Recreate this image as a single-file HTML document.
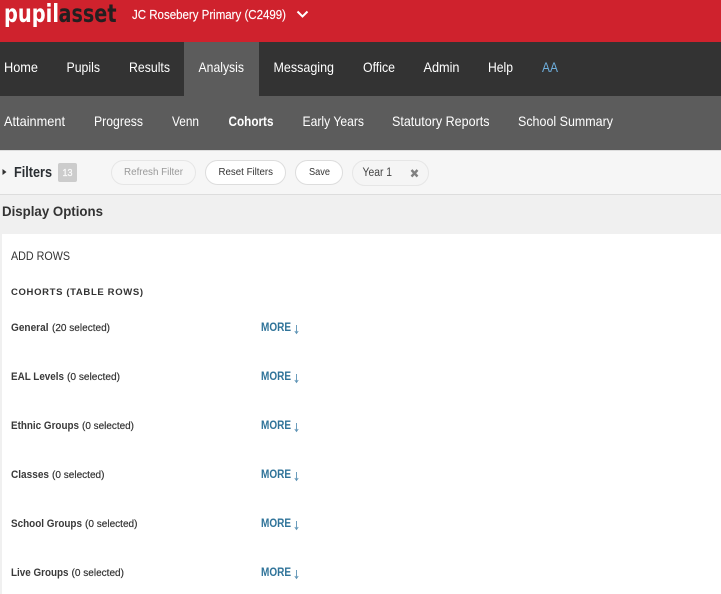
<!DOCTYPE html>
<html lang="en">
<head>
<meta charset="utf-8">
<title>Pupil Asset</title>
<style>
html,body{margin:0;padding:0;width:721px;height:594px;overflow:hidden;background:#fff}
svg{display:block}
text{font-family:"Liberation Sans",sans-serif}
.n{font-size:14px;fill:#fff}
.b{font-weight:bold}
.l{font-size:11px;font-weight:bold;fill:#3a3a3a}
.s{font-size:10px;fill:#333;stroke:#333;stroke-width:.18px}
.m{font-size:11.500px;font-weight:bold;fill:#2f7399}
.a{fill:none;stroke:#5d93b5;stroke-width:.9}
</style>
</head>
<body>
<svg width="721" height="594" viewBox="0 0 721 594" xmlns="http://www.w3.org/2000/svg">
<rect width="721" height="42" fill="#cf222d"/>
<rect y="42" width="721" height="54" fill="#333"/>
<rect y="96" width="721" height="54" fill="#5c5c5c"/>
<rect x="184" y="42" width="75" height="54" fill="#5c5c5c"/>
<rect y="150" width="721" height="1" fill="#ddd"/>
<rect y="151" width="721" height="43" fill="#f6f6f6"/>
<rect y="194" width="721" height="1" fill="#ddd"/>
<rect y="195" width="721" height="39" fill="#f0f0f0"/>
<rect y="234" width="2" height="360" fill="#f0f0f0"/>

<text x="4" y="22" font-size="25" font-weight="bold" fill="#fff" textLength="55" lengthAdjust="spacingAndGlyphs" style="font-family:'DejaVu Sans',sans-serif">pupil</text>
<text x="58.500" y="22" font-size="25" font-weight="bold" fill="#231f20" textLength="58" lengthAdjust="spacingAndGlyphs" style="font-family:'DejaVu Sans',sans-serif">asset</text>
<text x="132" y="19" font-size="13" fill="#fff" textLength="154" lengthAdjust="spacingAndGlyphs" stroke="#fff" stroke-width=".15">JC Rosebery Primary (C2499)</text>
<path d="M297.500 11.500L302.500 16.500L307.500 11.500" fill="none" stroke="#fff" stroke-width="2"/>

<text class="n" x="4" y="72" textLength="34" lengthAdjust="spacingAndGlyphs">Home</text>
<text class="n" x="66.500" y="72" textLength="33.500" lengthAdjust="spacingAndGlyphs">Pupils</text>
<text class="n" x="129" y="72" textLength="41" lengthAdjust="spacingAndGlyphs">Results</text>
<text class="n" x="198.500" y="72" textLength="45.500" lengthAdjust="spacingAndGlyphs">Analysis</text>
<text class="n" x="273.500" y="72" textLength="60.500" lengthAdjust="spacingAndGlyphs">Messaging</text>
<text class="n" x="363" y="72" textLength="32" lengthAdjust="spacingAndGlyphs">Office</text>
<text class="n" x="423.500" y="72" textLength="36" lengthAdjust="spacingAndGlyphs">Admin</text>
<text class="n" x="488" y="72" textLength="25" lengthAdjust="spacingAndGlyphs">Help</text>
<text class="n" x="542" y="72" textLength="16" lengthAdjust="spacingAndGlyphs" style="fill:#6fb0de">AA</text>

<text class="n" x="4" y="126" textLength="61" lengthAdjust="spacingAndGlyphs">Attainment</text>
<text class="n" x="94" y="126" textLength="49" lengthAdjust="spacingAndGlyphs">Progress</text>
<text class="n" x="172" y="126" textLength="27" lengthAdjust="spacingAndGlyphs">Venn</text>
<text class="n b" x="228.500" y="126" textLength="45" lengthAdjust="spacingAndGlyphs">Cohorts</text>
<text class="n" x="302.500" y="126" textLength="61.500" lengthAdjust="spacingAndGlyphs">Early Years</text>
<text class="n" x="392" y="126" textLength="97.500" lengthAdjust="spacingAndGlyphs">Statutory Reports</text>
<text class="n" x="518" y="126" textLength="95" lengthAdjust="spacingAndGlyphs">School Summary</text>

<path d="M2.500 169L6.500 172L2.500 175Z" fill="#333"/>
<text x="14" y="177" font-size="15" font-weight="bold" fill="#2b2f33" textLength="38" lengthAdjust="spacingAndGlyphs">Filters</text>
<rect x="58" y="163" width="19" height="19" rx="2" fill="#ccc"/>
<text x="62.500" y="176" font-size="10.500" fill="#fafafa" textLength="10" lengthAdjust="spacingAndGlyphs" stroke="#fafafa" stroke-width=".25">13</text>

<rect x="111.500" y="160.500" width="84" height="24" rx="12" fill="#f7f7f7" stroke="#e6e6e6"/>
<text x="124" y="175" font-size="10" fill="#999" textLength="59" lengthAdjust="spacingAndGlyphs">Refresh Filter</text>
<rect x="205.500" y="160.500" width="80" height="24" rx="12" fill="#fff" stroke="#ddd"/>
<text x="218.500" y="175" font-size="10" fill="#333" textLength="54.500" lengthAdjust="spacingAndGlyphs">Reset Filters</text>
<rect x="295.500" y="160.500" width="47" height="24" rx="12" fill="#fff" stroke="#ddd"/>
<text x="309" y="175" font-size="10" fill="#333" textLength="21" lengthAdjust="spacingAndGlyphs">Save</text>
<rect x="352.500" y="160.500" width="76" height="25" rx="12.500" fill="#f5f5f5" stroke="#e6e6e6"/>
<text x="362.500" y="176" font-size="11.500" fill="#444" textLength="29.500" lengthAdjust="spacingAndGlyphs">Year 1</text>
<path d="M411.500 170L417.500 176.500M417.500 170L411.500 176.500" stroke="#808080" stroke-width="2.400" fill="none"/>

<text x="2" y="216" font-size="14" font-weight="bold" fill="#333" textLength="101" lengthAdjust="spacingAndGlyphs">Display Options</text>

<text x="11" y="260" font-size="12" fill="#333" textLength="59" lengthAdjust="spacingAndGlyphs">ADD ROWS</text>
<text x="11" y="295" font-size="9.500" font-weight="bold" fill="#333" textLength="132" lengthAdjust="spacing">COHORTS (TABLE ROWS)</text>

<text class="l" x="11" y="331" textLength="37.500" lengthAdjust="spacingAndGlyphs">General</text>
<text class="s" x="52" y="331" textLength="58" lengthAdjust="spacingAndGlyphs">(20 selected)</text>
<text class="m" x="261" y="331" textLength="30" lengthAdjust="spacingAndGlyphs">MORE</text>
<path class="a" d="M296.500 325V333M294.800 331L296.500 333.500L298.200 331"/>

<text class="l" x="11" y="380" textLength="53" lengthAdjust="spacingAndGlyphs">EAL Levels</text>
<text class="s" x="67" y="380" textLength="53" lengthAdjust="spacingAndGlyphs">(0 selected)</text>
<text class="m" x="261" y="380" textLength="30" lengthAdjust="spacingAndGlyphs">MORE</text>
<path class="a" d="M296.500 374V382M294.800 380L296.500 382.500L298.200 380"/>

<text class="l" x="11" y="429" textLength="68" lengthAdjust="spacingAndGlyphs">Ethnic Groups</text>
<text class="s" x="82" y="429" textLength="52" lengthAdjust="spacingAndGlyphs">(0 selected)</text>
<text class="m" x="261" y="429" textLength="30" lengthAdjust="spacingAndGlyphs">MORE</text>
<path class="a" d="M296.500 423V431M294.800 429L296.500 431.500L298.200 429"/>

<text class="l" x="11" y="478" textLength="38" lengthAdjust="spacingAndGlyphs">Classes</text>
<text class="s" x="52" y="478" textLength="52.500" lengthAdjust="spacingAndGlyphs">(0 selected)</text>
<text class="m" x="261" y="478" textLength="30" lengthAdjust="spacingAndGlyphs">MORE</text>
<path class="a" d="M296.500 472V480M294.800 478L296.500 480.500L298.200 478"/>

<text class="l" x="11" y="527" textLength="71" lengthAdjust="spacingAndGlyphs">School Groups</text>
<text class="s" x="85" y="527" textLength="52.500" lengthAdjust="spacingAndGlyphs">(0 selected)</text>
<text class="m" x="261" y="527" textLength="30" lengthAdjust="spacingAndGlyphs">MORE</text>
<path class="a" d="M296.500 521V529M294.800 527L296.500 529.500L298.200 527"/>

<text class="l" x="11" y="576" textLength="57.500" lengthAdjust="spacingAndGlyphs">Live Groups</text>
<text class="s" x="71.500" y="576" textLength="52.500" lengthAdjust="spacingAndGlyphs">(0 selected)</text>
<text class="m" x="261" y="576" textLength="30" lengthAdjust="spacingAndGlyphs">MORE</text>
<path class="a" d="M296.500 570V578M294.800 576L296.500 578.500L298.200 576"/>
</svg>
</body>
</html>
